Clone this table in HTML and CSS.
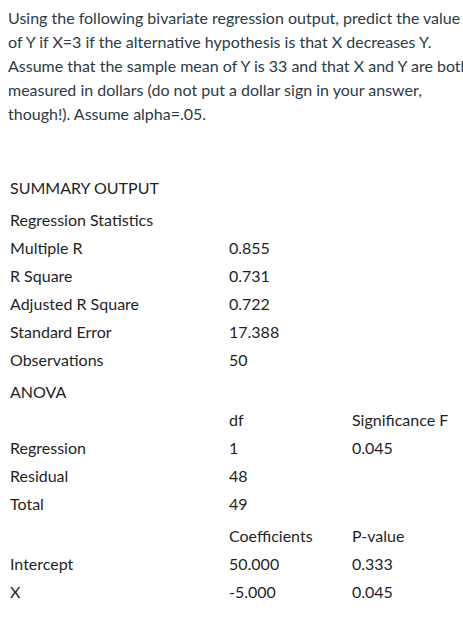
FILE: index.html
```html
<!DOCTYPE html>
<html>
<head>
<meta charset="utf-8">
<link rel="stylesheet" href="styles.css">
</head>
<body>
<div class="page">
  <p class="question">Using the following bivariate regression output, predict the value of Y if X=3 if the alternative hypothesis is that X decreases Y. Assume that the sample mean of Y is 33 and that X and Y are both measured in dollars (do not put a dollar sign in your answer, though!). Assume alpha=.05.</p>
  <table class="output">
    <tr class="sep"><td>SUMMARY OUTPUT</td><td></td><td></td></tr>
    <tr><td>Regression Statistics</td><td></td><td></td></tr>
    <tr><td>Multiple R</td><td>0.855</td><td></td></tr>
    <tr><td>R Square</td><td>0.731</td><td></td></tr>
    <tr><td>Adjusted R Square</td><td>0.722</td><td></td></tr>
    <tr><td>Standard Error</td><td>17.388</td><td></td></tr>
    <tr class="sep"><td>Observations</td><td>50</td><td></td></tr>
    <tr><td>ANOVA</td><td></td><td></td></tr>
    <tr><td></td><td>df</td><td>Significance F</td></tr>
    <tr><td>Regression</td><td>1</td><td>0.045</td></tr>
    <tr><td>Residual</td><td>48</td><td></td></tr>
    <tr class="sep"><td>Total</td><td>49</td><td></td></tr>
    <tr><td></td><td>Coefficients</td><td>P-value</td></tr>
    <tr><td>Intercept</td><td>50.000</td><td>0.333</td></tr>
    <tr><td>X</td><td>-5.000</td><td>0.045</td></tr>
  </table>
</div>
</body>
</html>
```
FILE: styles.css
```css
html, body {
  margin: 0;
  padding: 0;
  background: #ffffff;
}
.page {
  width: 463px;
  overflow: hidden;
  font-family: Lato, "Liberation Sans", sans-serif;
  font-size: 16px;
  color: #2d3b45;
}
.question {
  width: 466px;
  margin: 6px 0 0 8px;
  line-height: 24px;
}
.output {
  border-collapse: collapse;
  margin: 48px 0 0 8px;
  color: #1f1f1f;
}
.output td {
  padding: 0 2px;
  height: 28px;
  line-height: 28px;
  vertical-align: top;
  white-space: nowrap;
}
.output td:nth-child(1) { width: 215px; }
.output td:nth-child(2) { width: 119px; }
.output tr.sep td {
  height: 32px;
}
```
